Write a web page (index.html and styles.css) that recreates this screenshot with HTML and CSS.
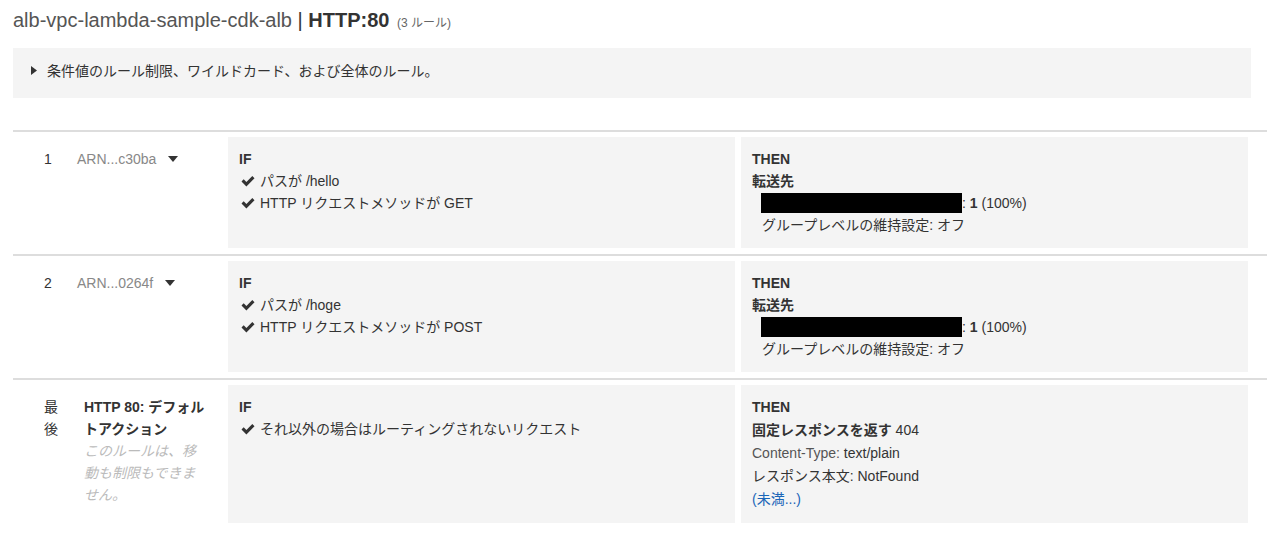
FILE: index.html
```html
<!DOCTYPE html>
<html lang="ja">
<head>
<meta charset="utf-8">
<link rel="stylesheet" href="styles.css">
</head>
<body>
<div class="page">
  <h1 class="title">alb-vpc-lambda-sample-cdk-alb <span class="sep">|</span> <b class="proto">HTTP:80</b> <span class="count">(3 ルール)</span></h1>

  <div class="info">
    <svg class="tri-right" width="6" height="9" viewBox="0 0 6 9"><path d="M0 0 L6 4.5 L0 9 Z" fill="#333"/></svg>
    <span>条件値のルール制限、ワイルドカード、および全体のルール。</span>
  </div>

  <div class="rules">
    <div class="rule">
      <div class="lead">
        <div class="num">1</div>
        <div class="name arn">ARN...c30ba <svg class="caret" width="10" height="6" viewBox="0 0 10 6"><path d="M0 0 L10 0 L5 6 Z" fill="#333"/></svg></div>
      </div>
      <div class="box">
        <div class="head">IF</div>
        <div class="cond"><svg class="check" width="14" height="12" viewBox="0 0 14 12"><path d="M0.5 6.5 L2.7 4.3 L5.4 7 L11.3 1.1 L13.5 3.3 L5.4 11.4 Z" fill="#333"/></svg>パスが /hello</div>
        <div class="cond"><svg class="check" width="14" height="12" viewBox="0 0 14 12"><path d="M0.5 6.5 L2.7 4.3 L5.4 7 L11.3 1.1 L13.5 3.3 L5.4 11.4 Z" fill="#333"/></svg>HTTP リクエストメソッドが GET</div>
      </div>
      <div class="box">
        <div class="head">THEN</div>
        <div class="head">転送先</div>
        <div class="target"><span class="redact"></span>: <b>1</b> (100%)</div>
        <div class="sub">グループレベルの維持設定: オフ</div>
      </div>
    </div>

    <div class="rule">
      <div class="lead">
        <div class="num">2</div>
        <div class="name arn">ARN...0264f <svg class="caret" width="10" height="6" viewBox="0 0 10 6"><path d="M0 0 L10 0 L5 6 Z" fill="#333"/></svg></div>
      </div>
      <div class="box">
        <div class="head">IF</div>
        <div class="cond"><svg class="check" width="14" height="12" viewBox="0 0 14 12"><path d="M0.5 6.5 L2.7 4.3 L5.4 7 L11.3 1.1 L13.5 3.3 L5.4 11.4 Z" fill="#333"/></svg>パスが /hoge</div>
        <div class="cond"><svg class="check" width="14" height="12" viewBox="0 0 14 12"><path d="M0.5 6.5 L2.7 4.3 L5.4 7 L11.3 1.1 L13.5 3.3 L5.4 11.4 Z" fill="#333"/></svg>HTTP リクエストメソッドが POST</div>
      </div>
      <div class="box">
        <div class="head">THEN</div>
        <div class="head">転送先</div>
        <div class="target"><span class="redact"></span>: <b>1</b> (100%)</div>
        <div class="sub">グループレベルの維持設定: オフ</div>
      </div>
    </div>

    <div class="rule">
      <div class="lead">
        <div class="num">最後</div>
        <div class="name default">
          <div class="dname">HTTP 80: デフォルトアクション</div>
          <div class="note">このルールは、移動も制限もできません。</div>
        </div>
      </div>
      <div class="box">
        <div class="head">IF</div>
        <div class="cond"><svg class="check" width="14" height="12" viewBox="0 0 14 12"><path d="M0.5 6.5 L2.7 4.3 L5.4 7 L11.3 1.1 L13.5 3.3 L5.4 11.4 Z" fill="#333"/></svg>それ以外の場合はルーティングされないリクエスト</div>
      </div>
      <div class="box tall">
        <div class="head">THEN</div>
        <div><b>固定レスポンスを返す</b> 404</div>
        <div><span class="light">Content-Type:</span> text/plain</div>
        <div>レスポンス本文: NotFound</div>
        <div><a class="link" href="#">(未満...)</a></div>
      </div>
    </div>
  </div>
</div>
</body>
</html>
```

FILE: styles.css
```css
* { box-sizing: border-box; }

body {
  margin: 0;
  background: #fff;
  color: #333;
  font-family: "Liberation Sans", Arial, "Noto Sans CJK JP", sans-serif;
  font-size: 14px;
  line-height: 22px;
}

.page {
  padding: 7px 5px 0 13px;
}

.title {
  margin: 0;
  height: 26px;
  font-size: 20px;
  font-weight: normal;
  line-height: 26px;
  color: #555;
}

.sep { color: #333; }

.proto {
  font-weight: bold;
  color: #333;
}

.count {
  font-size: 12px;
  line-height: 1;
  color: #666;
  margin-left: 2px;
}

.info {
  margin: 15px 16px 0 0;
  height: 50px;
  padding: 14px 18px 0;
  background: #f4f4f4;
  display: flex;
  align-items: flex-start;
  gap: 10px;
  font-size: 14px;
  line-height: 18px;
}

.tri-right { margin-top: 4px; flex: none; }

.rules {
  margin-top: 32px;
}

.rule {
  border-top: 2px solid #ddd;
  padding: 5px 19px 6px 0;
  display: flex;
  gap: 6px;
}

.lead {
  width: 209px;
  flex: none;
  display: flex;
  padding: 11px 0 0 31px;
}

.num {
  width: 14px;
  flex: none;
}

.name.arn {
  margin-left: 19px;
  color: #888;
  white-space: nowrap;
}

.caret {
  margin-left: 8px;
  vertical-align: 2px;
}

.name.default {
  margin-left: 26px;
  width: 122px;
}

.dname {
  font-weight: bold;
}

.note {
  font-style: italic;
  color: #bbb;
}

.box {
  flex: 1;
  background: #f4f4f4;
  padding: 11px 11px 12px;
}

.box.tall { line-height: 23px; }

.head { font-weight: bold; }

.cond {
  display: flex;
  align-items: center;
}

.check {
  margin: 0 5px 0 2px;
  flex: none;
}

.target {
  padding-left: 9px;
  display: flex;
  align-items: center;
  white-space: pre;
}

.target b { font-weight: bold; }

.redact {
  display: inline-block;
  width: 201px;
  height: 20px;
  background: #000;
}

.sub { padding-left: 10px; }

.light { color: #555; }

.link {
  color: #1a66b8;
  text-decoration: none;
}
```
